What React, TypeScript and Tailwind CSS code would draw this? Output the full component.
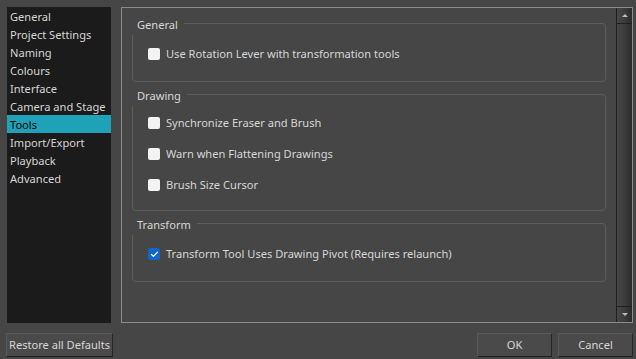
import { Check } from 'lucide-react';

const pages = [
  'General',
  'Project Settings',
  'Naming',
  'Colours',
  'Interface',
  'Camera and Stage',
  'Tools',
  'Import/Export',
  'Playback',
  'Advanced',
];

const groups = [
  { title: 'General', items: [{ label: 'Use Rotation Lever with transformation tools', checked: false }] },
  {
    title: 'Drawing',
    items: [
      { label: 'Synchronize Eraser and Brush', checked: false },
      { label: 'Warn when Flattening Drawings', checked: false },
      { label: 'Brush Size Cursor', checked: false },
    ],
  },
  { title: 'Transform', items: [{ label: 'Transform Tool Uses Drawing Pivot (Requires relaunch)', checked: true }] },
];

function CheckRow({ label, checked }: { label: string; checked: boolean }) {
  return (
    <div className="flex h-[18px] items-center gap-[6px]">
      {checked ? (
        <span className="flex h-[12px] w-[12px] items-center justify-center rounded-[2px] bg-[#1466c6]">
          <Check size={9} strokeWidth={3} className="text-white" />
        </span>
      ) : (
        <span className="h-[12px] w-[12px] rounded-[2px] bg-[#f3f3f3]" />
      )}
      <span>{label}</span>
    </div>
  );
}

function Button({ label, className }: { label: string; className: string }) {
  return (
    <div
      className={`flex h-[24px] items-center justify-center border border-[#5a5a5a] border-b-[#1e1e1e] border-r-[#262626] bg-[#4a4a4a] ${className}`}
    >
      {label}
    </div>
  );
}

export default function App() {
  return (
    <div
      className="flex h-[359px] w-[636px] flex-col whitespace-nowrap bg-[#464646] text-[11.1px] text-[#d6d6d6]"
      style={{ fontFamily: '"Noto Sans", "Open Sans", sans-serif' }}
    >
      <div className="flex h-[323px] gap-[10px] pl-[7px] pt-[7px]">
        {/* Page list */}
        <div className="w-[104px] bg-[#1b1b1b]">
          {pages.map((p) => (
            <div
              key={p}
              className={`flex h-[18px] items-center pl-[3px] pt-[2px] ${p === 'Tools' ? 'bg-[#1fa2b7] text-black' : ''}`}
            >
              {p}
            </div>
          ))}
        </div>

        {/* Settings panel */}
        <div className="flex w-[512px] border border-[#8c8c8c]">
          <div className="flex flex-1 flex-col gap-[12px] pl-[10px] pr-[10px] pt-[15px]">
            {groups.map((g, gi) => (
              <div
                key={g.title}
                className={`relative rounded-[4px] border border-[#5d5d5d] pl-[15px] ${gi === 1 ? 'pb-[16px] pt-[19px]' : 'pb-[18px] pt-[21px]'}`}
              >
                <span className="absolute left-[-1px] top-[-9px] h-[20px] bg-[#464646] pl-[5px] pr-[6px] leading-[20px]">
                  {g.title}
                </span>
                <div className="flex flex-col gap-[13px]">
                  {g.items.map((it) => (
                    <CheckRow key={it.label} label={it.label} checked={it.checked} />
                  ))}
                </div>
              </div>
            ))}
          </div>

          {/* Scrollbar */}
          <div className="flex w-[16px] flex-col border-l border-[#1f1f1f] bg-gradient-to-r from-[#474747] via-[#3c3c3c] to-[#2a2a2a]">
            <div className="flex h-[16px] items-center justify-center border-b border-[#1f1f1f]">
              <span className="h-0 w-0 border-x-[3px] border-b-[3px] border-x-transparent border-b-[#bdbdbd]" />
            </div>
            <div className="flex-1" />
            <div className="flex h-[16px] items-center justify-center border-t border-[#1f1f1f]">
              <span className="h-0 w-0 border-x-[3px] border-t-[3px] border-x-transparent border-t-[#bdbdbd]" />
            </div>
          </div>
        </div>
      </div>

      {/* Footer buttons */}
      <div className="flex pt-[10px]">
        <Button label="Restore all Defaults" className="ml-[6px] w-[107px]" />
        <div className="flex-1" />
        <Button label="OK" className="w-[75px]" />
        <Button label="Cancel" className="ml-[6px] mr-[3px] w-[75px]" />
      </div>
    </div>
  );
}
